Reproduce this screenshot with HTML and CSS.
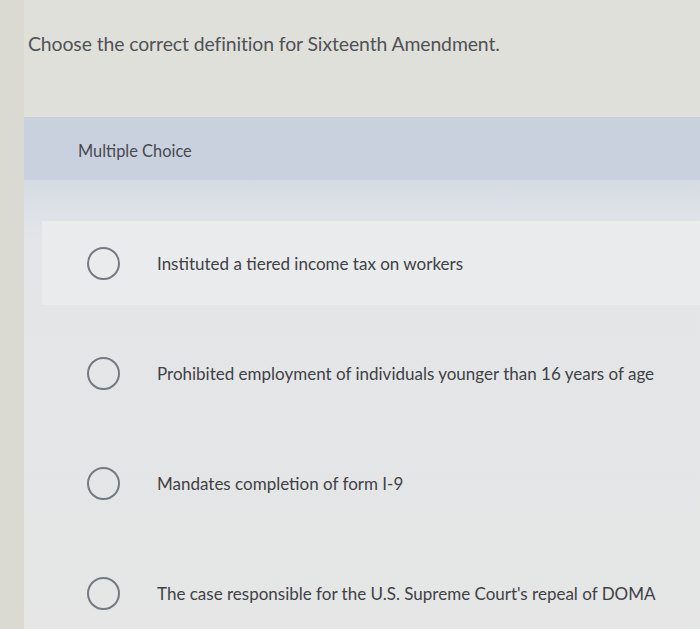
FILE: index.html
```html
<!DOCTYPE html>
<html>
<head>
<meta charset="utf-8">
<link rel="stylesheet" href="styles.css">
</head>
<body>
<div class="page">
  <div class="gutter"></div>
  <div class="content">
    <h1 class="question">Choose the correct definition for Sixteenth Amendment.</h1>
    <div class="panel">
      <div class="panel-head">Multiple Choice</div>
      <div class="choices">
        <div class="choice choice-hover"><span class="radio"></span><span class="label">Instituted a tiered income tax on workers</span></div>
        <div class="choice"><span class="radio"></span><span class="label">Prohibited employment of individuals younger than 16 years of age</span></div>
        <div class="choice"><span class="radio"></span><span class="label">Mandates completion of form I-9</span></div>
        <div class="choice"><span class="radio"></span><span class="label">The case responsible for the U.S. Supreme Court's repeal of DOMA</span></div>
      </div>
    </div>
  </div>
</div>
</body>
</html>
```
FILE: styles.css
```css
html, body {
  margin: 0;
  padding: 0;
  height: 100%;
}
body {
  background: #e0e0db;
  font-family: "Lato", "Liberation Sans", sans-serif;
  color: #3e3f42;
  overflow: hidden;
}
.page {
  display: flex;
  min-height: 629px;
}
.gutter {
  width: 24px;
  flex: none;
  background: #dadad3;
}
.content {
  flex: 1;
  display: flex;
  flex-direction: column;
}
.question {
  margin: 0;
  height: 117px;
  box-sizing: border-box;
  padding: 32px 0 0 4px;
  font-size: 19.4px;
  font-weight: 400;
  color: #505256;
  letter-spacing: -0.1px;
}
.panel {
  flex: 1;
  display: flex;
  flex-direction: column;
}
.panel-head {
  height: 63px;
  box-sizing: border-box;
  padding: 24px 0 0 54px;
  background: #c9d1de;
  font-size: 16.4px;
  color: #47494e;
}
.choices {
  flex: 1;
  display: flex;
  flex-direction: column;
  gap: 26px;
  padding: 41px 0 0 18px;
  background: linear-gradient(#d5dbe4 0px, #dde1e7 30px, #e3e5e8 60px, #e5e6e5 100%);
}
.choice {
  height: 84px;
  display: flex;
  align-items: center;
  padding-left: 45px;
  gap: 37px;
}
.choice-hover {
  background: #e9ebec;
}
.radio {
  width: 29px;
  height: 29px;
  border: 2px solid #737a82;
  border-radius: 50%;
  flex: none;
}
.label {
  font-size: 17px;
  color: #3f4146;
}
```
